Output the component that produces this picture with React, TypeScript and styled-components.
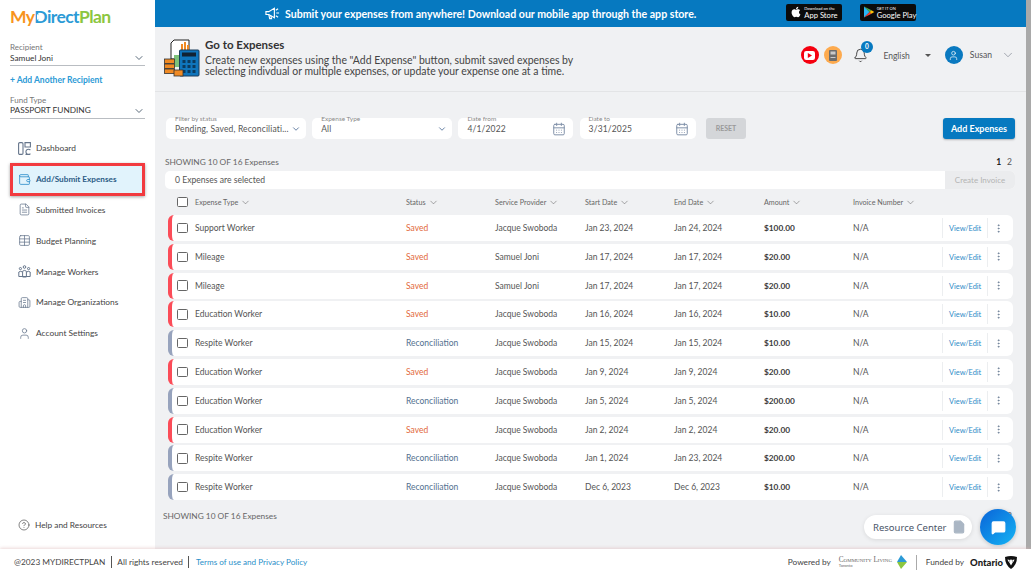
import React from "react";
import styled, { createGlobalStyle } from "styled-components";
import {
  Bell,
  CalendarDays,
  ChevronDown,
  CircleHelp,
  EllipsisVertical,
  FileText,
  MessageSquare,
  Table,
  User,
  Wallet,
  Building2,
  File,
} from "lucide-react";
import { FaApple } from "react-icons/fa";

type Expense = {
  type: string;
  status: "Saved" | "Reconciliation";
  provider: string;
  start: string;
  end: string;
  amount: string;
};

const expenses: Expense[] = [
  { type: "Support Worker", status: "Saved", provider: "Jacque Swoboda", start: "Jan 23, 2024", end: "Jan 24, 2024", amount: "$100.00" },
  { type: "Mileage", status: "Saved", provider: "Samuel Joni", start: "Jan 17, 2024", end: "Jan 17, 2024", amount: "$20.00" },
  { type: "Mileage", status: "Saved", provider: "Samuel Joni", start: "Jan 17, 2024", end: "Jan 17, 2024", amount: "$20.00" },
  { type: "Education Worker", status: "Saved", provider: "Jacque Swoboda", start: "Jan 16, 2024", end: "Jan 16, 2024", amount: "$10.00" },
  { type: "Respite Worker", status: "Reconciliation", provider: "Jacque Swoboda", start: "Jan 15, 2024", end: "Jan 15, 2024", amount: "$10.00" },
  { type: "Education Worker", status: "Saved", provider: "Jacque Swoboda", start: "Jan 9, 2024", end: "Jan 9, 2024", amount: "$20.00" },
  { type: "Education Worker", status: "Reconciliation", provider: "Jacque Swoboda", start: "Jan 5, 2024", end: "Jan 5, 2024", amount: "$200.00" },
  { type: "Education Worker", status: "Saved", provider: "Jacque Swoboda", start: "Jan 2, 2024", end: "Jan 2, 2024", amount: "$20.00" },
  { type: "Respite Worker", status: "Reconciliation", provider: "Jacque Swoboda", start: "Jan 1, 2024", end: "Jan 23, 2024", amount: "$200.00" },
  { type: "Respite Worker", status: "Reconciliation", provider: "Jacque Swoboda", start: "Dec 6, 2023", end: "Dec 6, 2023", amount: "$10.00" },
];

type IconProps = { size?: number; strokeWidth?: number; color?: string };

function DashboardIcon({ color }: IconProps) {
  return (
    <svg width="13" height="13" viewBox="0 0 13 13" fill="none" stroke={color} strokeWidth="1.1">
      <rect x="0.6" y="0.6" width="4.4" height="11.8" rx="1.2" />
      <path d="M7 0.6 H12.4 V5 H7Z" />
      <path d="M12.4 8 A2.6 2.6 0 1 0 12.4 11.6 M7.5 12.4 H12.4" />
    </svg>
  );
}

function WorkersIcon({ color }: IconProps) {
  return (
    <svg width="13" height="13" viewBox="0 0 13 13" fill="none" stroke={color} strokeWidth="1">
      <circle cx="6.5" cy="2" r="1.3" />
      <circle cx="2.4" cy="3.6" r="1.1" />
      <circle cx="10.6" cy="3.6" r="1.1" />
      <path d="M4.6 12 V6.2 Q6.5 4.6 8.4 6.2 V12Z" />
      <path d="M0.8 11.5 V7 Q2.4 5.8 4 6.8 M12.2 11.5 V7 Q10.6 5.8 9 6.8 M0.8 11.5 H12.2" />
    </svg>
  );
}

const navItems = [
  { label: "Dashboard", icon: DashboardIcon },
  { label: "Add/Submit Expenses", icon: Wallet, active: true },
  { label: "Submitted Invoices", icon: FileText },
  { label: "Budget Planning", icon: Table },
  { label: "Manage Workers", icon: WorkersIcon },
  { label: "Manage Organizations", icon: Building2 },
  { label: "Account Settings", icon: User },
];

const columns = ["Expense Type", "Status", "Service Provider", "Start Date", "End Date", "Amount", "Invoice Number"];

// the row's 4px coloured edge takes the place of 4px of the first column
const TAIL_COLS = "211px 89px 90px 89px 90px 89px 89px 46px 25px";

function App() {
  return (
    <>
      <GlobalStyle />
      <Page>
        <Body>
          <Sidebar>
            <Logo>
              <span style={{ color: "#f7941d" }}>My</span>
              <LogoD>D</LogoD>
              <span style={{ color: "#2b9ad6" }}>irect</span>
              <span style={{ color: "#8cc63f" }}>Plan</span>
            </Logo>
            <Picker>
              <PickerLabel>Recipient</PickerLabel>
              <PickerValue>
                Samuel Joni
                <ChevronDown size={12} color="#5b6b7b" />
              </PickerValue>
            </Picker>
            <AddRecipient>+ Add Another Recipient</AddRecipient>
            <Picker>
              <PickerLabel>Fund Type</PickerLabel>
              <PickerValue>
                PASSPORT FUNDING
                <ChevronDown size={12} color="#5b6b7b" />
              </PickerValue>
            </Picker>
            <Nav>
              {navItems.map((item) => (
                <NavItem key={item.label} $active={item.active}>
                  <item.icon size={13} strokeWidth={1.4} color={item.active ? "#1f86c6" : "#66768c"} />
                  {item.label}
                </NavItem>
              ))}
            </Nav>
            <Help>
              <CircleHelp size={12} strokeWidth={1.3} color="#444" />
              Help and Resources
            </Help>
          </Sidebar>

          <Main>
            <Banner>
              <svg width="15" height="15" viewBox="0 0 16 15" fill="none" stroke="#fff" strokeWidth="1.2">
                <path d="M1 5.5 H4 L10 2 V12 L4 8.5 H1Z" />
                <path d="M4 8.5 L5 13 H7 L6 9.5" />
                <path d="M12 7 H15 M11.5 4 L14 2.5 M11.5 10 L14 11.5" />
              </svg>
              <BannerText>Submit your expenses from anywhere! Download our mobile app through the app store.</BannerText>
              <StoreBadge>
                <FaApple size={12} />
                <StoreText>
                  <small>Download on the</small>
                  App Store
                </StoreText>
              </StoreBadge>
              <StoreBadge>
                <svg width="11" height="12" viewBox="0 0 11 12">
                  <polygon points="0,0 6,6 0,12" fill="#29b6f6" />
                  <polygon points="0,0 8,4 6,6" fill="#4caf50" />
                  <polygon points="0,12 8,8 6,6" fill="#f44336" />
                  <polygon points="8,4 11,6 8,8 6,6" fill="#ffc107" />
                </svg>
                <StoreText>
                  <small>GET IT ON</small>
                  Google Play
                </StoreText>
              </StoreBadge>
            </Banner>

            <PageHeader>
              <Illustration />
              <Intro>
                <IntroTitle>Go to Expenses</IntroTitle>
                <IntroText>
                  Create new expenses using the "Add Expense" button, submit saved expenses by selecting indivdual or
                  multiple expenses, or update your expense one at a time.
                </IntroText>
              </Intro>
              <HeaderTools>
                <RoundIcon $bg="#f5000f">
                  <svg width="11" height="9" viewBox="0 0 11 9">
                    <rect width="11" height="9" rx="2.2" fill="#fff" />
                    <polygon points="3.8,1.9 8,4.5 3.8,7.1" fill="#f5000f" />
                  </svg>
                </RoundIcon>
                <RoundIcon $bg="#fdaa4e">
                  <svg width="8" height="11" viewBox="0 0 8 11">
                    <rect width="8" height="11" rx="1" fill="#6d6d6d" />
                    <rect x="1.5" y="1.5" width="5" height="3" fill="#c9c9c9" />
                    <rect x="1.5" y="7" width="5" height="1" fill="#c9c9c9" />
                  </svg>
                </RoundIcon>
                <BellWrap>
                  <Bell size={15} strokeWidth={1.3} color="#222" />
                  <BellBadge>0</BellBadge>
                </BellWrap>
                <Language>English</Language>
                <Caret />
                <RoundIcon $bg="#0a79c0">
                  <User size={11} color="#fff" strokeWidth={1.5} />
                </RoundIcon>
                <UserName>Susan</UserName>
                <ChevronDown size={14} strokeWidth={1} color="#6b7280" />
              </HeaderTools>
            </PageHeader>

            <Content>
              <Filters>
                <Field $width={140}>
                  <FieldLabel>Filter by status</FieldLabel>
                  <FieldValue>Pending, Saved, Reconciliati...</FieldValue>
                  <ChevronDown size={10} color="#4a6a94" />
                </Field>
                <Field $width={140}>
                  <FieldLabel>Expense Type</FieldLabel>
                  <FieldValue>All</FieldValue>
                  <ChevronDown size={10} color="#4a6a94" />
                </Field>
                <DateField $width={115}>
                  <FieldLabel>Date from</FieldLabel>
                  <FieldValue>4/1/2022</FieldValue>
                  <CalendarDays size={14} strokeWidth={1.7} color="#8090a8" />
                </DateField>
                <DateField $width={116}>
                  <FieldLabel>Date to</FieldLabel>
                  <FieldValue>3/31/2025</FieldValue>
                  <CalendarDays size={14} strokeWidth={1.7} color="#8090a8" />
                </DateField>
                <ResetButton>RESET</ResetButton>
                <AddButton>Add Expenses</AddButton>
              </Filters>

              <ShowingRow>
                <Showing>SHOWING 10 OF 16 Expenses</Showing>
                <Pages>
                  <b>1</b>
                  <span>2</span>
                </Pages>
              </ShowingRow>

              <SelectionBar>
                <SelectionText>0 Expenses are selected</SelectionText>
                <CreateInvoice>Create Invoice</CreateInvoice>
              </SelectionBar>

              <HeadRow>
                <HeadCheck>
                  <Checkbox />
                </HeadCheck>
                {columns.map((c) => (
                  <HeadCell key={c}>
                    {c}
                    <ChevronDown size={11} strokeWidth={1} color="#444" />
                  </HeadCell>
                ))}
              </HeadRow>

              <Rows>
                {expenses.map((e, i) => (
                  <Row key={i} $saved={e.status === "Saved"}>
                    <CheckCell>
                      <Checkbox />
                    </CheckCell>
                    <Cell>{e.type}</Cell>
                    <StatusCell $saved={e.status === "Saved"}>{e.status}</StatusCell>
                    <Cell>{e.provider}</Cell>
                    <Cell>{e.start}</Cell>
                    <Cell>{e.end}</Cell>
                    <AmountCell>{e.amount}</AmountCell>
                    <Cell>N/A</Cell>
                    <ActionCell>View/Edit</ActionCell>
                    <MenuCell>
                      <EllipsisVertical size={11} color="#6c7f96" />
                    </MenuCell>
                  </Row>
                ))}
              </Rows>

              <BottomRow>
                <Showing>SHOWING 10 OF 16 Expenses</Showing>
                <Pages>
                  <b>1</b>
                  <span>2</span>
                </Pages>
              </BottomRow>
            </Content>

            <ResourceCenter>
              Resource Center
              <File size={14} fill="#aab6c4" color="#aab6c4" />
            </ResourceCenter>
            <ChatButton>
              <MessageSquare size={15} fill="#fff" color="#fff" />
            </ChatButton>
          </Main>
          <Scrollbar />
        </Body>

        <Footer>
          <FooterText>@2023 MYDIRECTPLAN</FooterText>
          <FooterDivider />
          <FooterText>All rights reserved</FooterText>
          <FooterDivider />
          <FooterLink>Terms of use and Privacy Policy</FooterLink>
          <FooterRight>
            <FooterText>Powered by</FooterText>
            <CommunityLogo>
              <CommunityText>
                Community Living
                <small>Toronto</small>
              </CommunityText>
              <svg width="10" height="14" viewBox="0 0 10 14">
                <polygon points="0,7 4,0 10,7" fill="#2b9ad6" />
                <polygon points="0,7 10,7 4,14" fill="#8cc63f" />
              </svg>
            </CommunityLogo>
            <TallDivider />
            <FooterText>Funded by</FooterText>
            <Ontario>Ontario</Ontario>
            <svg width="12" height="13" viewBox="0 0 12 13">
              <path d="M0 1 Q6 -1 12 1 Q12 9 6 13 Q0 9 0 1Z" fill="#111" />
              <path d="M6 3 L8 6 L6 9.5 L4 6Z M2.5 3.5 L5 4 L3.5 6Z M9.5 3.5 L7 4 L8.5 6Z" fill="#fff" />
            </svg>
          </FooterRight>
        </Footer>
      </Page>
    </>
  );
}

function Illustration() {
  return (
    <IllustrationSvg width="36" height="38" viewBox="0 0 36 38">
      <path d="M10 1 H25 V20 H7 V4Z" fill="#fff" stroke="#222" strokeWidth="1" />
      <rect x="17" y="5" width="2" height="7" fill="#f08a24" />
      <rect x="20" y="3" width="2" height="9" fill="#f08a24" />
      <rect x="23" y="6" width="2" height="6" fill="#f08a24" />
      <rect x="10" y="16" width="8" height="12" fill="#7dc27a" />
      <rect x="15.5" y="11" width="19.5" height="26" rx="1" fill="#0f75bc" stroke="#1c3d5a" strokeWidth="1" />
      <rect x="18" y="13.5" width="14" height="4" fill="#123" />
      {[0, 1, 2].map((r) =>
        [0, 1, 2].map((c) => (
          <rect key={`${r}${c}`} x={18.5 + c * 5} y={21 + r * 5} width="3" height="3" fill="#0b3a5e" />
        ))
      )}
      {[20, 25, 30].map((y) => (
        <rect key={y} x="0.5" y={y} width="10" height="4.5" fill="#f08a24" stroke="#333" strokeWidth="0.8" />
      ))}
      <rect x="10" y="31" width="9" height="6" fill="#f08a24" stroke="#333" strokeWidth="0.8" />
    </IllustrationSvg>
  );
}

export default App;

const GlobalStyle = createGlobalStyle`
  html, body {
    margin: 0;
    height: 100%;
    overflow: hidden;
    font-family: "Lato", "Liberation Sans", sans-serif;
    color: #444;
  }
  * { box-sizing: border-box; }
`;

const Page = styled.div`
  display: flex;
  flex-direction: column;
  height: 100vh;
`;

const Body = styled.div`
  display: flex;
  flex: 1;
  min-height: 0;
`;

const Sidebar = styled.aside`
  display: flex;
  flex-direction: column;
  width: 155px;
  flex-shrink: 0;
  padding: 6px 10px 0;
  background: #fff;
`;

const Logo = styled.div`
  height: 23px;
  margin-bottom: 14px;
  font-size: 17.5px;
  line-height: 22px;
  font-weight: 700;
  letter-spacing: -0.6px;
  white-space: nowrap;
`;

const LogoD = styled.span`
  position: relative;
  color: #2b9ad6;

  &::after {
    content: "";
    position: absolute;
    left: 3px;
    top: 8px;
    border-left: 4px solid #fff;
    border-top: 3px solid transparent;
    border-bottom: 3px solid transparent;
  }
`;

const Picker = styled.div`
  display: flex;
  flex-direction: column;
  border-bottom: 1px solid #b9bdc2;
  height: 23px;
`;

const PickerLabel = styled.div`
  font-size: 8px;
  line-height: 9px;
  color: #777;
`;

const PickerValue = styled.div`
  display: flex;
  justify-content: space-between;
  align-items: center;
  font-size: 8.3px;
  line-height: 11px;
  color: #333;
`;

const AddRecipient = styled.div`
  margin: 9px 0 9.5px;
  font-size: 8.5px;
  line-height: 11px;
  font-weight: 700;
  color: #2b9ad6;
`;

const Nav = styled.nav`
  display: flex;
  flex-direction: column;
  margin-top: 14.5px;
`;

const NavItem = styled.div<{ $active?: boolean }>`
  display: flex;
  align-items: center;
  gap: 5px;
  height: ${(p) => (p.$active ? "32.8px" : "30.8px")};
  margin: ${(p) => (p.$active ? "-1px 0" : "0")};
  padding-left: ${(p) => (p.$active ? "5px" : "8px")};
  font-size: ${(p) => (p.$active ? "8.2px" : "8.4px")};
  color: ${(p) => (p.$active ? "#2c5c86" : "#444")};
  font-weight: ${(p) => (p.$active ? 700 : 400)};
  background: ${(p) => (p.$active ? "#e1f3fc" : "transparent")};
  border: ${(p) => (p.$active ? "3px solid #f23a3f" : "none")};
  box-shadow: ${(p) => (p.$active ? "0 1px 3px rgba(0,0,0,0.35)" : "none")};
`;

const Help = styled.div`
  display: flex;
  align-items: center;
  gap: 5px;
  margin-top: auto;
  margin-bottom: 18px;
  padding-left: 8px;
  font-size: 8.3px;
  color: #444;
`;

const Main = styled.main`
  position: relative;
  display: flex;
  flex-direction: column;
  flex: 1;
  min-width: 0;
  background: #f0f1f3;
`;

const Scrollbar = styled.div`
  width: 5px;
  flex-shrink: 0;
  background: #a9a9a9;
`;

const Banner = styled.div`
  display: flex;
  align-items: center;
  height: 27px;
  padding-left: 110px;
  background: #0679c0;
  color: #fff;
`;

const BannerText = styled.div`
  margin: 0 90px 0 5px;
  font-size: 10.6px;
  font-weight: 700;
  white-space: nowrap;
`;

const StoreBadge = styled.div`
  display: flex;
  align-items: center;
  gap: 2px;
  width: 56px;
  height: 17px;
  margin: 0 18px 3px 0;
  padding-left: 4px;
  border-radius: 2px;
  background: #0b0b0b;
`;

const StoreText = styled.div`
  display: flex;
  flex-direction: column;
  font-size: 7.6px;
  line-height: 8px;
  white-space: nowrap;

  small {
    font-size: 4px;
    line-height: 5px;
  }
`;

const PageHeader = styled.header`
  display: flex;
  align-items: flex-start;
  height: 65px;
  padding: 11px 11px 0 9px;
  border-bottom: 1px solid #e3e4e6;
`;

const IllustrationSvg = styled.svg`
  margin-top: 1px;
  flex-shrink: 0;
`;

const Intro = styled.div`
  margin-left: 5px;
`;

const IntroTitle = styled.div`
  font-size: 11.5px;
  line-height: 14px;
  font-weight: 700;
  color: #333;
`;

const IntroText = styled.div`
  width: 372px;
  margin-top: 3px;
  font-size: 10.45px;
  line-height: 11px;
  color: #444;
`;

const HeaderTools = styled.div`
  display: flex;
  align-items: center;
  margin-left: auto;
  margin-top: 5px;
  height: 24px;
`;

const RoundIcon = styled.div<{ $bg: string }>`
  display: flex;
  align-items: center;
  justify-content: center;
  width: 18px;
  height: 18px;
  margin-right: 5px;
  border-radius: 50%;
  background: ${(p) => p.$bg};
`;

const BellWrap = styled.div`
  position: relative;
  display: flex;
  margin: 1px 0 0 6px;
`;

const BellBadge = styled.div`
  position: absolute;
  top: -7px;
  right: -5px;
  width: 12px;
  height: 12px;
  border-radius: 50%;
  background: #0679c0;
  color: #fff;
  font-size: 6.5px;
  font-weight: 700;
  line-height: 12px;
  text-align: center;
`;

const Language = styled.div`
  margin: 1px 0 0 15.5px;
  font-size: 8.5px;
  color: #555;
`;

const Caret = styled.div`
  margin: 1px 14px 0 15px;
  border-left: 3px solid transparent;
  border-right: 3px solid transparent;
  border-top: 3px solid #555;
`;

const UserName = styled.div`
  margin: 0 9px 0 2px;
  font-size: 8.6px;
  color: #555;
`;

const Content = styled.div`
  padding: 26px 11px 0 10px;
`;

const Filters = styled.div`
  display: flex;
  align-items: center;
  height: 21px;
  gap: 6.2px;
  padding-left: 1px;
`;

const Field = styled.div<{ $width: number }>`
  position: relative;
  display: flex;
  align-items: center;
  justify-content: space-between;
  width: ${(p) => p.$width}px;
  height: 21px;
  padding: 0 5px 0 9px;
  border-radius: 5px;
  background: #fff;
`;

const DateField = styled(Field)`
  padding-right: 7px;
`;

const FieldLabel = styled.span`
  position: absolute;
  top: -3px;
  left: 9px;
  font-size: 6.5px;
  line-height: 7px;
  color: #888;
`;

const FieldValue = styled.span`
  padding-top: 1px;
  font-size: 8.5px;
  letter-spacing: 0.15px;
  color: #555;
  white-space: nowrap;
`;

const ResetButton = styled.div`
  width: 40px;
  height: 21px;
  margin-left: 4.2px;
  border-radius: 3px;
  background: #d4d6d9;
  color: #999;
  font-size: 7px;
  font-weight: 700;
  line-height: 21px;
  text-align: center;
`;

const AddButton = styled.div`
  width: 72px;
  height: 21px;
  margin-left: auto;
  border-radius: 3px;
  background: #0679c0;
  color: #fff;
  font-size: 9px;
  font-weight: 700;
  line-height: 21px;
  text-align: center;
  box-shadow: 0 1px 2px rgba(0, 0, 0, 0.25);
`;

const ShowingRow = styled.div`
  display: flex;
  justify-content: space-between;
  align-items: center;
  height: 13px;
  margin-top: 16px;
`;

const Showing = styled.div`
  font-size: 8.3px;
  color: #666;
`;

const Pages = styled.div`
  display: flex;
  gap: 6px;
  padding-right: 3px;
  font-size: 8.5px;
  color: #555;

  b {
    color: #222;
  }
`;

const SelectionBar = styled.div`
  display: flex;
  height: 18px;
  margin-top: 3px;
  border-radius: 5px;
  background: #fff;
  overflow: hidden;
`;

const SelectionText = styled.div`
  flex: 1;
  padding-left: 10px;
  font-size: 8.6px;
  line-height: 18px;
  color: #555;
`;

const CreateInvoice = styled.div`
  width: 70px;
  background: #ebecee;
  color: #b4b4b4;
  font-size: 8px;
  line-height: 18px;
  text-align: center;
`;

const HeadRow = styled.div`
  display: grid;
  grid-template-columns: 27px ${TAIL_COLS};
  align-items: center;
  height: 14px;
  margin: 6px 2px 0 3px;
`;

const HeadCell = styled.div`
  display: flex;
  align-items: center;
  gap: 2px;
  font-size: 7.2px;
  color: #666;
  white-space: nowrap;
`;

const CheckCell = styled.div`
  display: flex;
  padding-left: 5px;
`;

const HeadCheck = styled(CheckCell)`
  padding-left: 9px;
`;

const Checkbox = styled.div`
  width: 10.5px;
  height: 10.5px;
  border: 1.2px solid #666;
  border-radius: 1.5px;
  background: #fff;
`;

const Rows = styled.div`
  display: flex;
  flex-direction: column;
  gap: 2.8px;
  margin: 6px 2px 0 3px;
`;

const Row = styled.div<{ $saved: boolean }>`
  display: grid;
  grid-template-columns: 23px ${TAIL_COLS};
  align-items: center;
  height: 26px;
  border-radius: 6px;
  background: #fff;
  border-left: 4px solid ${(p) => (p.$saved ? "#fb4c58" : "#97a3bd")};
`;

const Cell = styled.div`
  font-size: 8.5px;
  color: #555;
  white-space: nowrap;
`;

const StatusCell = styled(Cell)<{ $saved: boolean }>`
  color: ${(p) => (p.$saved ? "#e2683a" : "#53708f")};
`;

const AmountCell = styled(Cell)`
  font-size: 8.3px;
  font-weight: 700;
  color: #3c3c3c;
`;

const ActionCell = styled.div`
  height: 20px;
  padding-left: 6px;
  border-left: 1px solid #eceef0;
  border-right: 1px solid #eceef0;
  font-size: 7.4px;
  line-height: 21px;
  color: #2f8cc7;
  white-space: nowrap;
`;

const MenuCell = styled.div`
  display: flex;
  justify-content: center;
  padding-right: 4px;
`;

const BottomRow = styled(ShowingRow)`
  margin: 9px 0 0 -2px;
`;

const ResourceCenter = styled.div`
  position: absolute;
  right: 54px;
  bottom: 10px;
  display: flex;
  align-items: center;
  gap: 5px;
  width: 108px;
  height: 24px;
  padding-left: 9px;
  border-radius: 12px;
  background: #fff;
  box-shadow: 0 1px 4px rgba(0, 0, 0, 0.1);
  font-family: "Noto Sans", "Lato", sans-serif;
  font-size: 9.5px;
  color: #4a5568;
`;

const ChatButton = styled.div`
  position: absolute;
  right: 10px;
  bottom: 4px;
  display: flex;
  align-items: center;
  justify-content: center;
  width: 36px;
  height: 36px;
  border-radius: 50%;
  background: linear-gradient(135deg, #0a63d8, #14b4f4);
  box-shadow: 0 1px 4px rgba(0, 0, 0, 0.2);
`;

const Footer = styled.footer`
  position: relative;
  display: flex;
  align-items: center;
  flex-shrink: 0;
  height: 27px;
  padding: 0 14px 1px;
  background: #fff;
  box-shadow: 0 -1px 3px rgba(220, 180, 180, 0.5);
`;

const FooterText = styled.span`
  font-size: 8.3px;
  color: #444;
  white-space: nowrap;
`;

const FooterDivider = styled.div`
  width: 1px;
  height: 12px;
  margin: 0 5.5px;
  background: #555;
`;

const FooterLink = styled(FooterText)`
  margin-left: 1px;
  font-size: 8.15px;
  color: #2b8fc9;
`;

const FooterRight = styled.div`
  display: flex;
  align-items: center;
  margin-left: auto;
`;

const CommunityLogo = styled.div`
  display: flex;
  align-items: center;
  justify-content: space-between;
  width: 68px;
  margin-left: 8px;
`;

const CommunityText = styled.div`
  display: flex;
  flex-direction: column;
  font-family: "Liberation Serif", serif;
  font-size: 7.2px;
  line-height: 7px;
  font-variant: small-caps;
  white-space: nowrap;
  color: #666;

  small {
    font-family: "Lato", sans-serif;
    font-variant: normal;
    font-size: 4px;
    line-height: 4px;
  }
`;

const TallDivider = styled.div`
  width: 1px;
  height: 15px;
  margin: 0 9px;
  background: #aaa;
`;

const Ontario = styled.span`
  margin: 0 2px 0 6px;
  font-size: 9.5px;
  font-weight: 900;
  color: #1a1a1a;
`;
